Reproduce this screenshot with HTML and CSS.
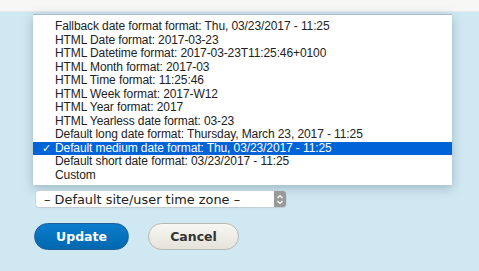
FILE: index.html
```html
<!DOCTYPE html>
<html>
<head>
<meta charset="utf-8">
<link rel="stylesheet" href="styles.css">
</head>
<body>
<div class="topbar"></div>
<div class="page">
  <ul class="menu">
    <li class="opt">Fallback date format format: Thu, 03/23/2017 - 11:25</li>
    <li class="opt">HTML Date format: 2017-03-23</li>
    <li class="opt">HTML Datetime format: 2017-03-23T11:25:46+0100</li>
    <li class="opt">HTML Month format: 2017-03</li>
    <li class="opt">HTML Time format: 11:25:46</li>
    <li class="opt">HTML Week format: 2017-W12</li>
    <li class="opt">HTML Year format: 2017</li>
    <li class="opt">HTML Yearless date format: 03-23</li>
    <li class="opt">Default long date format: Thursday, March 23, 2017 - 11:25</li>
    <li class="opt sel"><span class="check">✓</span>Default medium date format: Thu, 03/23/2017 - 11:25</li>
    <li class="opt">Default short date format: 03/23/2017 - 11:25</li>
    <li class="opt">Custom</li>
  </ul>
  <div class="select">
    <span class="select-text">– Default site/user time zone –</span>
    <span class="arrows">
      <svg width="8" height="11" viewBox="0 0 8 11"><path d="M1.5 4 L4 1.5 L6.5 4 M1.5 7 L4 9.5 L6.5 7" fill="none" stroke="#fff" stroke-width="1.2"/></svg>
    </span>
  </div>
  <div class="actions">
    <button class="btn primary">Update</button>
    <button class="btn secondary">Cancel</button>
  </div>
</div>
</body>
</html>
```
FILE: styles.css
```css
html, body {
  margin: 0;
  padding: 0;
}
body {
  width: 479px;
  height: 271px;
  overflow: hidden;
  background: #d0e8f2;
  font-family: "Liberation Sans", Arial, sans-serif;
}
.topbar {
  height: 11px;
  background: #f7f7f6;
  border-bottom: 1px solid #e6e8e8;
}
.page {
  padding: 2px 0 0 33px;
}
.menu {
  list-style: none;
  margin: 0;
  width: 419px;
  box-sizing: border-box;
  padding: 5px 0 4px;
  background: #fff;
  border-top: 1px solid #a9bcc6;
  box-shadow: 0 3px 10px rgba(60, 90, 110, 0.35);
  height: 171px;
}
.opt {
  height: 13.5px;
  line-height: 13.5px;
  font-size: 12px;
  letter-spacing: -0.1px;
  color: #222;
  padding-left: 22px;
  position: relative;
  white-space: nowrap;
}
.opt.sel {
  background: #0064d8;
  color: #fff;
}
.check {
  position: absolute;
  left: 9px;
  top: 0;
  font-size: 11px;
}
.select {
  margin: 6px 0 0 3px;
  width: 250px;
  height: 16px;
  box-sizing: border-box;
  background: #fff;
  border-radius: 3px;
  box-shadow: 0 0 0 0.5px #c0c8cc, 0 1px 1px rgba(0,0,0,0.08);
  display: flex;
  align-items: center;
  justify-content: space-between;
  font-family: "DejaVu Sans", sans-serif;
  font-size: 12.9px;
  color: #222;
  overflow: hidden;
}
.select-text {
  padding-left: 8px;
}
.arrows {
  width: 12px;
  height: 16px;
  background: #9a9a9a;
  display: flex;
  align-items: center;
  justify-content: center;
}
.actions {
  display: flex;
  gap: 19px;
  margin-top: 16px;
  padding-left: 1px;
}
.btn {
  height: 27px;
  border-radius: 14px;
  font-family: "DejaVu Sans", sans-serif;
  font-weight: bold;
  font-size: 12.5px;
  padding: 0;
  cursor: pointer;
}
.primary {
  width: 95px;
  background: linear-gradient(#0b7ccc, #0068b0);
  border: 1px solid #1f5f96;
  color: #fff;
}
.secondary {
  width: 91px;
  background: linear-gradient(#f8f7f2, #e4e2da);
  border: 1px solid #b8b8b0;
  color: #333;
}
```
